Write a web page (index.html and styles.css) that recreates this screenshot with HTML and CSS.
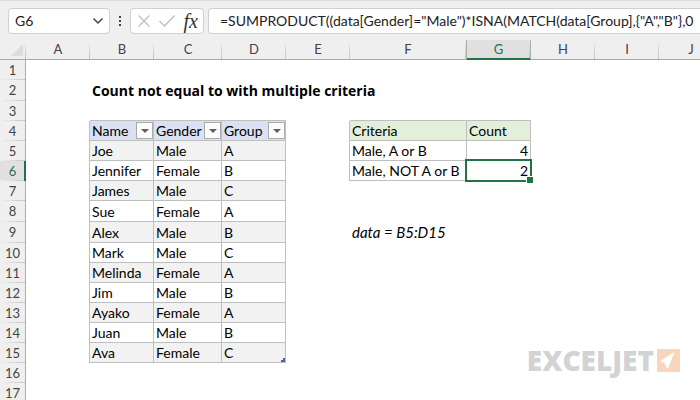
FILE: index.html
```html
<!DOCTYPE html>
<html lang="en">
<head>
    <meta charset="UTF-8">
    <meta name="viewport" content="width=device-width, initial-scale=1.0">
    <title>Count not equal to with multiple criteria</title>
    <link rel="stylesheet" href="styles.css">
</head>
<body>

    <!-- Formula bar -->
    <div class="formula-bar">
        <div class="box name-box">
            <input type="text" class="name-input" value="G6" aria-label="Name box">
            <button type="button" class="icon-btn" aria-label="Open name list">
                <svg width="12" height="8" viewBox="0 0 12 8"><path d="M1.5 1.5 L6 6 L10.5 1.5" fill="none" stroke="#444" stroke-width="1.5"/></svg>
            </button>
        </div>
        <svg class="dots" width="4" height="12" viewBox="0 0 4 12"><path d="M1 1h2v2h-2z M1 5h2v2h-2z M1 9h2v2h-2z" fill="#444"/></svg>
        <div class="box actions">
            <button type="button" class="icon-btn" aria-label="Cancel">
                <svg width="14" height="14" viewBox="0 0 14 14"><path d="M1.5 1.5 L12.5 12.5 M12.5 1.5 L1.5 12.5" fill="none" stroke="#bdbdbd" stroke-width="1.3"/></svg>
            </button>
            <button type="button" class="icon-btn" aria-label="Enter">
                <svg width="18" height="14" viewBox="0 0 18 14"><path d="M1.5 7 L6.5 12 L16.5 1.5" fill="none" stroke="#bdbdbd" stroke-width="1.3"/></svg>
            </button>
            <button type="button" class="icon-btn fx" aria-label="Insert function">fx</button>
        </div>
        <input type="text" class="box formula" aria-label="Formula" value='=SUMPRODUCT((data[Gender]="Male")*ISNA(MATCH(data[Group],{"A","B"},0'>
    </div>

    <!-- Worksheet -->
    <div class="sheet">
        <table class="grid">
            <colgroup>
                <col class="col-num"><col class="col"><col class="col"><col class="col-c"><col class="col"><col class="col">
                <col class="col-f"><col class="col"><col class="col"><col class="col"><col class="col">
            </colgroup>
            <thead>
                <tr>
                    <th class="corner"><svg width="12" height="12" viewBox="0 0 12 12"><path d="M12 0V12H0z" fill="#dcdcdc"/></svg></th>
                    <th>A</th><th>B</th><th>C</th><th>D</th><th>E</th><th class="before">F</th><th class="active">G</th><th>H</th><th>I</th><th>J</th>
                </tr>
            </thead>
            <tbody>
                <tr><th>1</th><td colspan="10"></td></tr>
                <tr class="tall"><th>2</th><td></td><td class="title" colspan="9">Count not equal to with multiple criteria</td></tr>
                <tr><th>3</th><td></td><td class="above"></td><td class="above"></td><td class="above"></td><td></td><td class="above"></td><td class="above"></td><td colspan="3"></td></tr>
                <tr>
                    <th>4</th><td class="left"></td>
                    <td class="cell blue"><div class="head">Name<button type="button" class="filter" aria-label="Filter Name"></button></div></td>
                    <td class="cell blue"><div class="head">Gender<button type="button" class="filter" aria-label="Filter Gender"></button></div></td>
                    <td class="cell blue"><div class="head">Group<button type="button" class="filter" aria-label="Filter Group"></button></div></td>
                    <td class="left"></td><td class="cell green">Criteria</td><td class="cell green">Count</td><td colspan="3"></td>
                </tr>
                <tr class="band">
                    <th>5</th><td class="left"></td><td class="cell">Joe</td><td class="cell">Male</td><td class="cell">A</td>
                    <td class="left"></td><td class="cell plain">Male, A or B</td><td class="cell plain number">4</td><td colspan="3"></td>
                </tr>
                <tr>
                    <th class="active">6</th><td class="left"></td><td class="cell">Jennifer</td><td class="cell">Female</td><td class="cell">B</td>
                    <td class="left"></td><td class="cell">Male, NOT A or B</td><td class="cell number selected">2</td><td colspan="3"></td>
                </tr>
                <tr class="band"><th>7</th><td class="left"></td><td class="cell">James</td><td class="cell">Male</td><td class="cell">C</td><td colspan="6"></td></tr>
                <tr class="tall"><th>8</th><td class="left"></td><td class="cell">Sue</td><td class="cell">Female</td><td class="cell">A</td><td colspan="6"></td></tr>
                <tr class="band tall"><th>9</th><td class="left"></td><td class="cell">Alex</td><td class="cell">Male</td><td class="cell">B</td><td></td><td class="note" colspan="5">data = B5:D15</td></tr>
                <tr><th>10</th><td class="left"></td><td class="cell">Mark</td><td class="cell">Male</td><td class="cell">C</td><td colspan="6"></td></tr>
                <tr class="band"><th>11</th><td class="left"></td><td class="cell">Melinda</td><td class="cell">Female</td><td class="cell">A</td><td colspan="6"></td></tr>
                <tr><th>12</th><td class="left"></td><td class="cell">Jim</td><td class="cell">Male</td><td class="cell">B</td><td colspan="6"></td></tr>
                <tr class="band"><th>13</th><td class="left"></td><td class="cell">Ayako</td><td class="cell">Female</td><td class="cell">A</td><td colspan="6"></td></tr>
                <tr><th>14</th><td class="left"></td><td class="cell">Juan</td><td class="cell">Male</td><td class="cell">B</td><td colspan="6"></td></tr>
                <tr class="band"><th>15</th><td class="left"></td><td class="cell">Ava</td><td class="cell">Female</td><td class="cell last">C</td><td colspan="6"></td></tr>
                <tr><th>16</th><td colspan="10"></td></tr>
                <tr><th>17</th><td colspan="10"></td></tr>
            </tbody>
        </table>
    </div>

    <!-- Logo over the sheet -->
    <div class="logo">
        <span>EXCELJET</span>
        <svg width="23" height="23" viewBox="0 0 23 23"><path d="M0 0H23V23H0z" fill="#f9d5bd"/><path d="M17.5 3 L3 12 L8 14.5 L10.5 20.5z" fill="#fff"/></svg>
    </div>

</body>
</html>
```
FILE: styles.css
```css
* {
    box-sizing: border-box;
}

body {
    margin: 0;
    height: 100vh;
    overflow: hidden;
    position: relative;
    display: flex;
    flex-direction: column;
    background-color: #fff;
    color: #000;
    font-family: Lato, "Open Sans", sans-serif;
    font-size: 14px;
}

/* Formula bar */
.formula-bar {
    display: flex;
    align-items: center;
    flex-shrink: 0;
    height: 40px;
    padding: 0 0 0 8px;
    background-color: #efefef;
    border-top: 1px solid #dcdcdc;
}

.box {
    height: 26px;
    background-color: #fff;
    border: 1px solid #d0d0d0;
    border-radius: 4px;
}

.name-box {
    display: flex;
    align-items: center;
    width: 102px;
    padding: 0 5px 0 6px;
}

.name-input {
    flex: 1;
    min-width: 0;
    padding: 0;
    border: 0;
    font: inherit;
    color: #222;
}

.icon-btn {
    display: flex;
    padding: 0;
    border: 0;
    background: none;
}

.dots {
    margin: 0 8px;
}

.actions {
    display: flex;
    align-items: center;
    justify-content: space-between;
    width: 74px;
    padding: 0 5px 0 6px;
}

.fx {
    font-family: "Liberation Serif", serif;
    font-size: 20px;
    line-height: 20px;
    font-style: italic;
    color: #333;
}

.formula {
    flex: 1;
    min-width: 0;
    margin-left: 4px;
    padding: 0 0 0 11px;
    border-right: 0;
    border-radius: 4px 0 0 4px;
    font: inherit;
    color: #222;
}

/* Worksheet */
.sheet {
    flex: 1;
    overflow: hidden;
}

.grid {
    width: 723px;
    table-layout: fixed;
    border-collapse: separate;
    border-spacing: 0;
}

.col-num {
    width: 26px;
}

.col {
    width: 64px;
}

.col-c {
    width: 68px;
}

.col-f {
    width: 117px;
}

.grid tr {
    height: 20px;
}

.grid .tall {
    height: 21px;
}

.grid th,
.grid td {
    padding: 0;
    line-height: 19px;
    white-space: nowrap;
}

.grid th {
    font-size: 13px;
    font-weight: normal;
    color: #444;
    background-color: #efefef;
}

thead th {
    border-bottom: 1px solid #ababab;
    background-image: linear-gradient(to bottom, #efefef, #c0c0c0);
    background-size: 1px 100%;
    background-position: right;
    background-repeat: no-repeat;
}

.corner svg {
    display: block;
    margin: 0 3px 0 auto;
}

tbody th {
    border-right: 1px solid #ababab;
    background-image: linear-gradient(to right, #efefef, #c6c6c6);
    background-size: 100% 1px;
    background-position: bottom;
    background-repeat: no-repeat;
}

thead .before {
    border-right: 1px solid #ababab;
}

.grid .active {
    color: #217346;
    background-color: #e0e0e0;
}

thead .active {
    border-right: 1px solid #ababab;
    border-bottom: 1px solid #217346;
    box-shadow: inset 0 -1px #217346;
}

tbody .active {
    border-right: 1px solid #217346;
    box-shadow: inset -1px 0 #217346;
}

.grid .title,
.grid .note,
.grid .cell {
    padding-left: 2px;
}

.title {
    font-family: "Open Sans", sans-serif;
    font-weight: bold;
}

.note {
    font-size: 15px;
    font-style: italic;
}

.above {
    border-bottom: 1px solid #bfbfbf;
}

.left {
    border-right: 1px solid #bfbfbf;
}

.cell {
    border-right: 1px solid #bfbfbf;
    border-bottom: 1px solid #bfbfbf;
}

.band .cell {
    background-color: #f2f2f2;
}

.band .plain {
    background-color: #fff;
}

.blue {
    background-color: #d9e1f2;
}

.green {
    background-color: #e2efda;
}

.grid .number {
    padding-right: 2px;
    text-align: right;
}

.head {
    display: flex;
    align-items: center;
    justify-content: space-between;
    height: 19px;
}

.filter {
    display: flex;
    align-items: center;
    justify-content: center;
    width: 17px;
    height: 17px;
    padding: 0;
    border: 1px solid #ababab;
    background-color: #fcfcfd;
}

.filter::before {
    content: "";
    border: 4px solid transparent;
    border-top-color: #606060;
    border-bottom: 0;
}

/* Selection frame and its fill handle */
.selected {
    position: relative;
}

.selected::before {
    content: "";
    position: absolute;
    inset: -2px;
    border: 2px solid #217346;
}

.selected::after {
    content: "";
    position: absolute;
    right: -3px;
    bottom: -3px;
    width: 6px;
    height: 6px;
    background-color: #217346;
    border-top: 1px solid #fff;
    border-left: 1px solid #fff;
}

/* Table resize mark */
.last {
    position: relative;
}

.last::after {
    content: "";
    position: absolute;
    right: 0;
    bottom: 0;
    width: 4px;
    height: 4px;
    background-color: #4a5fb5;
    clip-path: polygon(50% 0, 100% 0, 100% 100%, 0 100%, 0 50%, 50% 50%);
}

/* Logo */
.logo {
    position: absolute;
    right: 20px;
    bottom: 24px;
    display: flex;
    align-items: center;
    gap: 3px;
    color: #d2d4d4;
    font-family: "Open Sans", sans-serif;
    font-size: 28px;
    font-weight: 800;
    line-height: 32px;
}
```
